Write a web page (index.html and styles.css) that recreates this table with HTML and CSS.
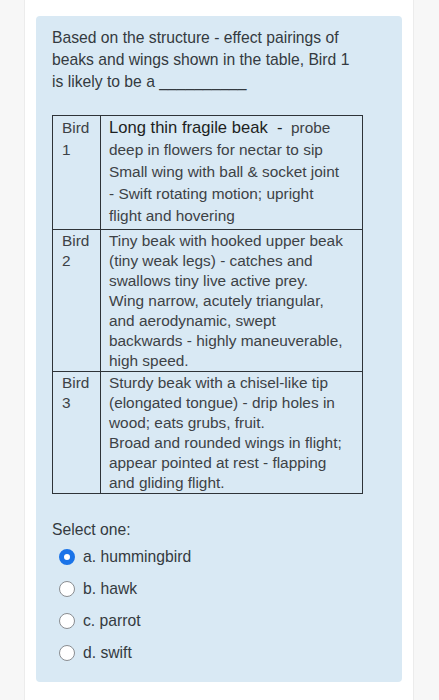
FILE: index.html
```html
<!DOCTYPE html>
<html>
<head>
<meta charset="utf-8">
<link rel="stylesheet" href="styles.css">
</head>
<body>
<div class="page">
  <div class="formulation">
    <p class="qtext">Based on the structure - effect pairings of beaks and wings shown in the table, Bird 1 is likely to be a __________</p>
    <table class="birds">
      <colgroup><col class="c1"><col class="c2"></colgroup>
      <tr class="r1">
        <td>Bird 1</td>
        <td><span class="lead">Long thin fragile beak&nbsp; -</span> &nbsp;probe deep in flowers for nectar to sip<br>Small wing with ball &amp; socket joint - Swift rotating motion; upright flight and hovering</td>
      </tr>
      <tr>
        <td>Bird 2</td>
        <td>Tiny beak with hooked upper beak (tiny weak legs) - catches and swallows tiny live active prey.<br>Wing narrow, acutely triangular, and aerodynamic, swept backwards - highly maneuverable, high speed.</td>
      </tr>
      <tr>
        <td>Bird 3</td>
        <td>Sturdy beak with a chisel-like tip (elongated tongue) - drip holes in wood; eats grubs, fruit.<br>Broad and rounded wings in flight; appear pointed at rest - flapping and gliding flight.</td>
      </tr>
    </table>
    <div class="prompt">Select one:</div>
    <div class="answers">
      <div class="opt"><span class="radio checked"></span><span>a. hummingbird</span></div>
      <div class="opt"><span class="radio"></span><span>b. hawk</span></div>
      <div class="opt"><span class="radio"></span><span>c. parrot</span></div>
      <div class="opt"><span class="radio"></span><span>d. swift</span></div>
    </div>
  </div>
</div>
</body>
</html>
```
FILE: styles.css
```css
html, body {
  margin: 0;
  padding: 0;
  background: #f7f7f7;
  height: 100%;
}
body {
  font-family: "Liberation Sans", Arial, sans-serif;
  color: #343a40;
}
.page {
  background: #fff;
  width: 390px;
  margin-left: 24px;
  min-height: 100%;
  padding: 16px 11px 18px 11px;
  box-sizing: border-box;
  border-left: 1px solid #ececec;
  border-right: 1px solid #ececec;
}
.formulation {
  background: #d9e9f4;
  border-radius: 4px;
  padding: 11px 16px 18px 16px;
}
.qtext {
  margin: 0 0 22px 0;
  padding-right: 30px;
  font-size: 15.7px;
  line-height: 22px;
}
.birds {
  border-collapse: collapse;
  table-layout: fixed;
  width: 311px;
  font-size: 15.4px;
  line-height: 20px;
  color: #3d4246;
  margin-bottom: 25px;
}
.birds col.c1 { width: 48px; }
.birds td {
  border: 1.5px solid #2e3338;
  vertical-align: top;
  padding: 1px 14px 0 8px;
}
.birds td:first-child { padding-left: 9px; padding-right: 2px; }
.birds tr.r1 td { line-height: 22px; padding-bottom: 2px; }
.lead {
  font-size: 16.6px;
  color: #1d1f22;
}
.prompt {
  font-size: 15.7px;
  line-height: 22px;
  margin-bottom: 5px;
}
.answers {
  display: flex;
  flex-direction: column;
  gap: 10px;
  padding-left: 7px;
}
.opt {
  display: flex;
  align-items: center;
  gap: 8px;
  font-size: 15.7px;
  line-height: 22px;
}
.radio {
  width: 16px;
  height: 16px;
  box-sizing: border-box;
  border-radius: 50%;
  border: 1.5px solid #8a8d91;
  background: #fff;
  flex: none;
}
.radio.checked {
  border: 5px solid #1a73e8;
  background: #fff;
}
```
